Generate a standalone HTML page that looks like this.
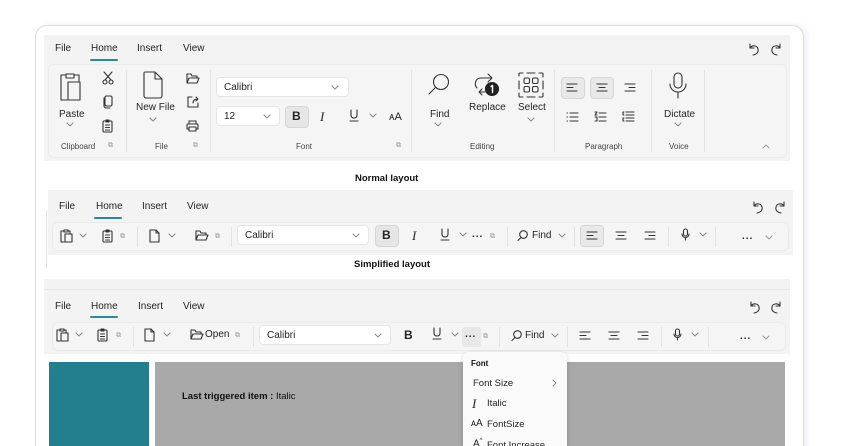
<!DOCTYPE html>
<html style="width:850px;height:446px;overflow:hidden"><head><meta charset="utf-8"><style>
*{margin:0;padding:0;box-sizing:border-box}
body{width:850px;height:446px;overflow:hidden;background:#fff;font-family:"Liberation Sans",sans-serif;position:relative;color:#242424}
.a{position:absolute}
.t{position:absolute;font-size:10px;white-space:nowrap;color:#242424}
.s{position:absolute;font-size:8px;color:#444;white-space:nowrap}
.ul{position:absolute;height:2px;background:#2a8a99;border-radius:1px}
svg{position:absolute;overflow:visible}
svg *{fill:none;stroke:#333;stroke-width:1.1;stroke-linecap:round;stroke-linejoin:round}
svg.c *{stroke:#888;stroke-width:1}
.box{position:absolute;background:#fff;border:1px solid #e6e6e6;border-radius:4px}
.sel{position:absolute;background:#e6e6e6;border:1px solid #d6d6d6;border-radius:4px}
.sep{position:absolute;width:1px;background:#e2e2e2}
</style></head><body>
<div class="a" style="left:35px;top:25px;width:769px;height:440px;border:1.5px solid #dcdcdc;border-radius:12px;box-shadow:3px 0 6px rgba(200,205,230,0.35)"></div>

<!-- Ribbon 1 -->
<div class="a" style="left:44px;top:35px;width:746px;height:126px;background:#f3f3f3"></div>
<div class="a" style="left:48px;top:64px;width:739px;height:94px;background:#f5f5f5;border:1px solid #ebebeb;border-radius:6px"></div>
<div class="t" style="left:55px;top:43px">File</div>
<div class="t" style="left:91px;top:43px">Home</div>
<div class="ul" style="left:90px;top:59px;width:28px"></div>
<div class="t" style="left:137px;top:43px">Insert</div>
<div class="t" style="left:183px;top:43px">View</div>
<svg style="left:747px;top:42px" width="14" height="14" viewBox="0 0 14 14"><path d="M3 2v4h4M3 6c2-3 7-3 8 1s-3 6-5 6"/></svg>
<svg style="left:769px;top:42px" width="14" height="14" viewBox="0 0 14 14"><path d="M11 2v4H7M11 6C9 3 4 3 3 7s3 6 5 6"/></svg>

<svg style="left:58px;top:72px" width="26" height="30" viewBox="0 0 26 30"><path d="M8 3H3v25h6M8 2h8v4H8zM16 3h5v6M10 10h12v18H10z"/></svg>
<div class="t" style="left:59px;top:109px">Paste</div>
<svg class="c" style="left:67px;top:123px" width="6" height="3"><path d="M0 0l3 3 3-3"/></svg>
<svg style="left:102px;top:71px" width="12" height="14" viewBox="0 0 12 14"><path d="M2 1l7 8M10 1L3 9"/><circle cx="3" cy="11" r="2"/><circle cx="9" cy="11" r="2"/></svg>
<svg style="left:103px;top:95px" width="10" height="13" viewBox="0 0 10 13"><rect x="2" y="1" width="7" height="10" rx="1.5"/><path d="M1 3v8c0 1 1 2 2 2h4"/></svg>
<svg style="left:102px;top:119px" width="11" height="14" viewBox="0 0 11 14"><rect x="1" y="2" width="9" height="11" rx="1"/><path d="M4 1h3v2H4zM3.5 6h4M3.5 8.5h4M3.5 11h4"/></svg>
<div class="s" style="left:61px;top:142px">Clipboard</div>
<div class="s" style="left:108px;top:142px;font-size:7px;color:#999">⧉</div>
<div class="sep" style="left:126px;top:70px;height:82px"></div>
<svg style="left:142px;top:70px" width="22" height="30" viewBox="0 0 22 30"><path d="M3 2h10l7 7v17c0 1-1 2-2 2H4c-1 0-2-1-2-2V3c0-1 1-1 1-1zM13 2v7h7"/></svg>
<div class="t" style="left:136px;top:102px">New File</div>
<svg class="c" style="left:150px;top:118px" width="6" height="3"><path d="M0 0l3 3 3-3"/></svg>
<svg style="left:186px;top:73px" width="14" height="11" viewBox="0 0 14 11"><path d="M1 10V1h4l1 2h5v2M1 10l2-5h10l-2 5z"/></svg>
<svg style="left:187px;top:96px" width="12" height="12" viewBox="0 0 12 12"><path d="M5 1H1v10h10V7M6 7c0-3 2-4 5-4M9 1l2 2-2 2"/></svg>
<svg style="left:186px;top:120px" width="13" height="12" viewBox="0 0 13 12"><path d="M3 4V1h7v3M1 9V5c0-1 1-1 1-1h9c1 0 1 1 1 1v4h-2M3 9H1M3 7h7v4H3z"/></svg>
<div class="s" style="left:155px;top:142px">File</div>
<div class="s" style="left:193px;top:142px;font-size:7px;color:#999">⧉</div>
<div class="sep" style="left:210px;top:70px;height:82px"></div>
<div class="box" style="left:216px;top:77px;width:133px;height:20px"></div>
<div class="t" style="left:224px;top:82px">Calibri</div>
<svg class="c" style="left:332px;top:86px" width="6" height="3"><path d="M0 0l3 3 3-3"/></svg>
<div class="box" style="left:216px;top:106px;width:64px;height:20px"></div>
<div class="t" style="left:224px;top:111px">12</div>
<svg class="c" style="left:264px;top:115px" width="6" height="3"><path d="M0 0l3 3 3-3"/></svg>
<div class="sel" style="left:285px;top:106px;width:24px;height:22px"></div>
<div class="t" style="left:292px;top:109px;font-weight:bold;font-size:12px">B</div>
<div class="t" style="left:320px;top:109px;font-size:13px;font-family:'Liberation Serif',serif;font-style:italic">I</div>
<svg style="left:349px;top:109px" width="10" height="13" viewBox="0 0 10 13"><path d="M2 1v5c0 2 1 3 3 3s3-1 3-3V1M1 12h8"/></svg>
<svg class="c" style="left:370px;top:114px" width="6" height="3"><path d="M0 0l3 3 3-3"/></svg>
<div class="t" style="left:389px;top:111px;font-size:11px">ᴀA</div>
<div class="s" style="left:296px;top:142px">Font</div>
<div class="s" style="left:396px;top:142px;font-size:7px;color:#999">⧉</div>
<div class="sep" style="left:411px;top:70px;height:82px"></div>
<svg style="left:427px;top:73px" width="24" height="24" viewBox="0 0 24 24"><circle cx="14" cy="9" r="7.5"/><path d="M8.5 14.5L2 21"/></svg>
<div class="t" style="left:430px;top:109px">Find</div>
<svg class="c" style="left:435px;top:123px" width="6" height="3"><path d="M0 0l3 3 3-3"/></svg>
<svg style="left:471px;top:70px" width="30" height="28" viewBox="0 0 30 28"><path d="M6 18c-3-3-2-10 4-10h11M17 4l4 4-4 4M14 22H8M11 19l-3 3 3 3" stroke-width="1.6"/><circle cx="21" cy="19" r="6.5" style="fill:#222;stroke:#222"/><path d="M20 16.5l1.5-1v7" style="stroke:#fff;stroke-width:1.4"/></svg>
<div class="t" style="left:469px;top:102px">Replace</div>
<svg style="left:517px;top:71px" width="28" height="28" viewBox="0 0 28 28"><path d="M2 5V3c0-1 1-1 1-1h3M10 2h8M22 2h3c1 0 1 1 1 1v3M26 10v8M26 22v3c0 1-1 1-1 1h-3M18 26h-8M6 26H3c-1 0-1-1-1-1v-3M2 18v-8" stroke-width="1.8"/><rect x="7" y="7" width="5.5" height="5.5" rx="1.5" stroke-width="1.6"/><rect x="15.5" y="7" width="5.5" height="5.5" rx="1.5" stroke-width="1.6"/><rect x="7" y="15.5" width="5.5" height="5.5" rx="1.5" stroke-width="1.6"/><rect x="15.5" y="15.5" width="5.5" height="5.5" rx="1.5" stroke-width="1.6"/></svg>
<div class="t" style="left:518px;top:102px">Select</div>
<svg class="c" style="left:528px;top:118px" width="6" height="3"><path d="M0 0l3 3 3-3"/></svg>
<div class="s" style="left:470px;top:142px">Editing</div>
<div class="sep" style="left:554px;top:70px;height:82px"></div>
<div class="sel" style="left:561px;top:77px;width:24px;height:22px;background:#e9e9e9"></div>
<div class="sel" style="left:590px;top:77px;width:24px;height:22px;background:#e9e9e9"></div>
<svg style="left:566px;top:83px" width="12" height="9"><path d="M1 1h10M1 4.5h6M1 8h10"/></svg>
<svg style="left:596px;top:83px" width="12" height="9"><path d="M1 1h10M3 4.5h6M1 8h10"/></svg>
<svg style="left:624px;top:83px" width="12" height="9"><path d="M1 1h10M5 4.5h6M1 8h10"/></svg>
<svg style="left:566px;top:112px" width="12" height="10"><path d="M1 1h.5M1 5h.5M1 9h.5M4 1h8M4 5h8M4 9h8"/></svg>
<svg style="left:594px;top:111px" width="13" height="11"><path d="M1 1h2l-2 3h2M1 6h2v4H1M5 2h7M5 6h7M5 10h7"/></svg>
<svg style="left:622px;top:111px" width="13" height="11"><path d="M2 1H1v3h1M2 7H1v3h1M4 1h8M4 4h8M4 7h8M4 10h8"/></svg>
<div class="s" style="left:585px;top:142px">Paragraph</div>
<div class="sep" style="left:651px;top:70px;height:82px"></div>
<svg style="left:668px;top:72px" width="20" height="28" viewBox="0 0 20 28"><rect x="6" y="1" width="8" height="15" rx="4" stroke-width="1.4"/><path d="M2 12c0 5 4 8 8 8s8-3 8-8M10 20v6" stroke-width="1.4"/></svg>
<div class="t" style="left:664px;top:109px">Dictate</div>
<svg class="c" style="left:675px;top:123px" width="6" height="3"><path d="M0 0l3 3 3-3"/></svg>
<div class="s" style="left:669px;top:142px">Voice</div>
<div class="sep" style="left:704px;top:70px;height:82px"></div>
<svg class="c" style="left:763px;top:145px" width="6" height="3"><path d="M0 3l3-3 3 3" style="stroke:#999"/></svg>

<div class="t" style="left:355px;top:173px;font-weight:bold;font-size:9.5px;color:#111">Normal layout</div>

<!-- Ribbon 2 -->
<div class="a" style="left:48px;top:190px;width:745px;height:65px;background:#f3f3f3"></div>
<div class="a" style="left:46px;top:210px;width:1px;height:58px;background:#e2e2e2"></div>
<div class="a" style="left:52px;top:222px;width:737px;height:29px;background:#f5f5f5;border:1px solid #ebebeb;border-radius:6px"></div>
<div class="t" style="left:59px;top:201px">File</div>
<div class="t" style="left:96px;top:201px">Home</div>
<div class="ul" style="left:94px;top:217px;width:28px"></div>
<div class="t" style="left:142px;top:201px">Insert</div>
<div class="t" style="left:187px;top:201px">View</div>
<svg style="left:751px;top:200px" width="14" height="14" viewBox="0 0 14 14"><path d="M3 2v4h4M3 6c2-3 7-3 8 1s-3 6-5 6"/></svg>
<svg style="left:773px;top:200px" width="14" height="14" viewBox="0 0 14 14"><path d="M11 2v4H7M11 6C9 3 4 3 3 7s3 6 5 6"/></svg>
<svg style="left:60px;top:229px" width="13" height="14" viewBox="0 0 13 14"><path d="M4 2H1v11h3M4 1h4v2H4zM8 2h2v3M5 5h7v8H5z"/></svg>
<svg class="c" style="left:80px;top:234px" width="6" height="3"><path d="M0 0l3 3 3-3"/></svg>
<svg style="left:102px;top:229px" width="11" height="14" viewBox="0 0 11 14"><rect x="1" y="2" width="9" height="11" rx="1"/><path d="M4 1h3v2H4zM3.5 6h4M3.5 8.5h4M3.5 11h4"/></svg>
<div class="s" style="left:120px;top:233px;font-size:7px;color:#999">⧉</div>
<div class="sep" style="left:137px;top:227px;height:20px"></div>
<svg style="left:149px;top:229px" width="11" height="14" viewBox="0 0 11 14"><path d="M1 1h6l3 3v9H1zM7 1v3h3"/></svg>
<svg class="c" style="left:169px;top:234px" width="6" height="3"><path d="M0 0l3 3 3-3"/></svg>
<svg style="left:195px;top:230px" width="14" height="11" viewBox="0 0 14 11"><path d="M1 10V1h4l1 2h5v2M1 10l2-5h10l-2 5z"/></svg>
<div class="s" style="left:215px;top:233px;font-size:7px;color:#999">⧉</div>
<div class="sep" style="left:231px;top:227px;height:20px"></div>
<div class="box" style="left:237px;top:225px;width:132px;height:20px"></div>
<div class="t" style="left:245px;top:230px">Calibri</div>
<svg class="c" style="left:353px;top:234px" width="6" height="3"><path d="M0 0l3 3 3-3"/></svg>
<div class="sel" style="left:375px;top:225px;width:24px;height:22px"></div>
<div class="t" style="left:382px;top:228px;font-weight:bold;font-size:12px">B</div>
<div class="t" style="left:412px;top:228px;font-size:13px;font-family:'Liberation Serif',serif;font-style:italic">I</div>
<svg style="left:440px;top:228px" width="10" height="13" viewBox="0 0 10 13"><path d="M2 1v5c0 2 1 3 3 3s3-1 3-3V1M1 12h8"/></svg>
<svg class="c" style="left:460px;top:233px" width="6" height="3"><path d="M0 0l3 3 3-3"/></svg>
<div class="t" style="left:472px;top:229px;font-weight:bold;letter-spacing:1px">...</div>
<div class="s" style="left:490px;top:233px;font-size:7px;color:#999">⧉</div>
<div class="sep" style="left:507px;top:227px;height:20px"></div>
<svg style="left:517px;top:230px" width="11" height="11" viewBox="0 0 11 11"><circle cx="6.5" cy="4.5" r="3.8"/><path d="M4 7.5L1 10.5"/></svg>
<div class="t" style="left:532px;top:230px">Find</div>
<svg class="c" style="left:559px;top:234px" width="6" height="3"><path d="M0 0l3 3 3-3"/></svg>
<div class="sep" style="left:574px;top:227px;height:20px"></div>
<div class="sel" style="left:580px;top:225px;width:24px;height:22px;background:#e9e9e9"></div>
<svg style="left:586px;top:231px" width="12" height="9"><path d="M1 1h10M1 4.5h6M1 8h10"/></svg>
<svg style="left:615px;top:231px" width="12" height="9"><path d="M1 1h10M3 4.5h6M1 8h10"/></svg>
<svg style="left:644px;top:231px" width="12" height="9"><path d="M1 1h10M5 4.5h6M1 8h10"/></svg>
<div class="sep" style="left:668px;top:227px;height:20px"></div>
<svg style="left:681px;top:228px" width="9" height="13" viewBox="0 0 9 13"><rect x="2.5" y="1" width="4" height="7" rx="2"/><path d="M1 6c0 2 1.5 3.5 3.5 3.5S8 8 8 6M4.5 9.5V12"/></svg>
<svg class="c" style="left:700px;top:233px" width="6" height="3"><path d="M0 0l3 3 3-3"/></svg>
<div class="sep" style="left:715px;top:227px;height:20px"></div>
<div class="t" style="left:742px;top:231px;font-weight:bold;letter-spacing:1px">...</div>
<svg class="c" style="left:766px;top:236px" width="6" height="3"><path d="M0 0l3 3 3-3" style="stroke:#999"/></svg>

<div class="t" style="left:354px;top:259px;font-weight:bold;font-size:9.5px;color:#111">Simplified layout</div>

<!-- Ribbon 3 -->
<div class="a" style="left:44px;top:279px;width:746px;height:75px;background:#f3f3f3"></div>
<div class="a" style="left:44px;top:289px;width:746px;height:1px;background:#e8e8e8"></div>
<div class="a" style="left:52px;top:322px;width:734px;height:29px;background:#f5f5f5;border:1px solid #ebebeb;border-radius:6px"></div>
<div class="t" style="left:55px;top:301px">File</div>
<div class="t" style="left:91px;top:301px">Home</div>
<div class="ul" style="left:90px;top:316px;width:28px"></div>
<div class="t" style="left:138px;top:301px">Insert</div>
<div class="t" style="left:183px;top:301px">View</div>
<svg style="left:748px;top:300px" width="14" height="14" viewBox="0 0 14 14"><path d="M3 2v4h4M3 6c2-3 7-3 8 1s-3 6-5 6"/></svg>
<svg style="left:769px;top:300px" width="14" height="14" viewBox="0 0 14 14"><path d="M11 2v4H7M11 6C9 3 4 3 3 7s3 6 5 6"/></svg>
<svg style="left:56px;top:328px" width="13" height="14" viewBox="0 0 13 14"><path d="M4 2H1v11h3M4 1h4v2H4zM8 2h2v3M5 5h7v8H5z"/></svg>
<svg class="c" style="left:76px;top:333px" width="6" height="3"><path d="M0 0l3 3 3-3"/></svg>
<svg style="left:97px;top:328px" width="11" height="14" viewBox="0 0 11 14"><rect x="1" y="2" width="9" height="11" rx="1"/><path d="M4 1h3v2H4zM3.5 6h4M3.5 8.5h4M3.5 11h4"/></svg>
<div class="s" style="left:116px;top:332px;font-size:7px;color:#999">⧉</div>
<div class="sep" style="left:133px;top:327px;height:20px"></div>
<svg style="left:144px;top:328px" width="11" height="14" viewBox="0 0 11 14"><path d="M1 1h6l3 3v9H1zM7 1v3h3"/></svg>
<svg class="c" style="left:164px;top:333px" width="6" height="3"><path d="M0 0l3 3 3-3"/></svg>
<svg style="left:190px;top:329px" width="14" height="11" viewBox="0 0 14 11"><path d="M1 10V1h4l1 2h5v2M1 10l2-5h10l-2 5z"/></svg>
<div class="t" style="left:205px;top:329px">Open</div>
<div class="s" style="left:235px;top:332px;font-size:7px;color:#999">⧉</div>
<div class="sep" style="left:253px;top:327px;height:20px"></div>
<div class="box" style="left:259px;top:325px;width:132px;height:20px"></div>
<div class="t" style="left:267px;top:330px">Calibri</div>
<svg class="c" style="left:375px;top:334px" width="6" height="3"><path d="M0 0l3 3 3-3"/></svg>
<div class="t" style="left:404px;top:328px;font-weight:bold;font-size:12px">B</div>
<svg style="left:432px;top:327px" width="10" height="13" viewBox="0 0 10 13"><path d="M2 1v5c0 2 1 3 3 3s3-1 3-3V1M1 12h8"/></svg>
<svg class="c" style="left:452px;top:333px" width="6" height="3"><path d="M0 0l3 3 3-3"/></svg>
<div class="a" style="left:462px;top:327px;width:19px;height:20px;background:#e8e8e8;border-radius:3px"></div>
<div class="t" style="left:465px;top:329px;font-weight:bold;letter-spacing:1px">...</div>
<div class="s" style="left:483px;top:333px;font-size:7px;color:#999">⧉</div>
<div class="sep" style="left:499px;top:327px;height:20px"></div>
<svg style="left:511px;top:330px" width="11" height="11" viewBox="0 0 11 11"><circle cx="6.5" cy="4.5" r="3.8"/><path d="M4 7.5L1 10.5"/></svg>
<div class="t" style="left:525px;top:330px">Find</div>
<svg class="c" style="left:552px;top:334px" width="6" height="3"><path d="M0 0l3 3 3-3"/></svg>
<div class="sep" style="left:567px;top:327px;height:20px"></div>
<svg style="left:579px;top:331px" width="12" height="9"><path d="M1 1h10M1 4.5h6M1 8h10"/></svg>
<svg style="left:608px;top:331px" width="12" height="9"><path d="M1 1h10M3 4.5h6M1 8h10"/></svg>
<svg style="left:637px;top:331px" width="12" height="9"><path d="M1 1h10M5 4.5h6M1 8h10"/></svg>
<div class="sep" style="left:661px;top:327px;height:20px"></div>
<svg style="left:673px;top:328px" width="9" height="13" viewBox="0 0 9 13"><rect x="2.5" y="1" width="4" height="7" rx="2"/><path d="M1 6c0 2 1.5 3.5 3.5 3.5S8 8 8 6M4.5 9.5V12"/></svg>
<svg class="c" style="left:692px;top:333px" width="6" height="3"><path d="M0 0l3 3 3-3"/></svg>
<div class="sep" style="left:708px;top:327px;height:20px"></div>
<div class="t" style="left:740px;top:331px;font-weight:bold;letter-spacing:1px">...</div>
<svg class="c" style="left:763px;top:336px" width="6" height="3"><path d="M0 0l3 3 3-3" style="stroke:#999"/></svg>

<div class="a" style="left:49px;top:362px;width:100px;height:84px;background:#237f8e"></div>
<div class="a" style="left:155px;top:362px;width:630px;height:84px;background:#a9a9a9"></div>
<div class="t" style="left:182px;top:391px;font-size:9.5px;color:#111"><b>Last triggered item :</b> Italic</div>

<div class="a" style="left:463px;top:352px;width:104px;height:94px;background:#fafafa;border-radius:6px 6px 0 0;box-shadow:0 2px 6px rgba(0,0,0,0.18)"></div>
<div class="t" style="left:471px;top:359px;font-size:8px;font-weight:bold;color:#111">Font</div>
<div class="t" style="left:473px;top:378px;font-size:9.5px">Font Size</div>
<svg class="c" style="left:553px;top:380px" width="3" height="6"><path d="M0 0l3 3-3 3"/></svg>
<div class="t" style="left:472px;top:396px;font-size:13px;font-family:'Liberation Serif',serif;font-style:italic">I</div>
<div class="t" style="left:487px;top:398px;font-size:9.5px">Italic</div>
<div class="t" style="left:471px;top:418px;font-size:10px">ᴀA</div>
<div class="t" style="left:487px;top:419px;font-size:9.5px">FontSize</div>
<div class="t" style="left:473px;top:438px;font-size:10px">A<sup style="font-size:6px">^</sup></div>
<div class="t" style="left:487px;top:440px;font-size:9.5px">Font Increase</div>
</body></html>
